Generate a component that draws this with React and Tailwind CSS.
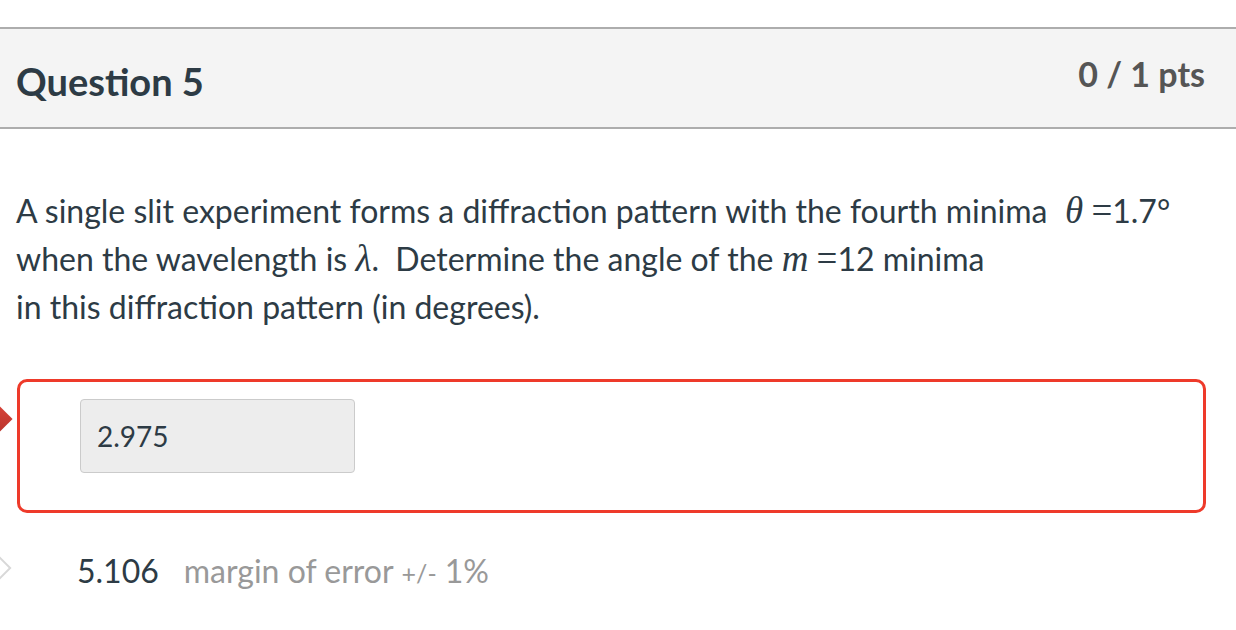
import React from 'react';

const Math = ({ children, italic }) => (
  <span className={`font-['Liberation_Serif',serif] text-[37px] leading-none ${italic ? 'italic' : ''}`}>{children}</span>
);

const App = () => {
  return (
    <div className="relative min-h-[630px] bg-white pt-[27px] font-['Lato',sans-serif] text-[#2d3b45]">
      {/* question header */}
      <div className="flex h-[102px] items-center justify-between border-y-2 border-[#adadad] bg-[#f4f4f4] pl-4 pr-[31px]">
        <h2 className="mt-[6px] text-[38px] font-bold text-[#2d3b45]">Question 5</h2>
        <div className="mt-[-10px] text-[34px] font-bold text-[#555]">0 / 1 pts</div>
      </div>

      {/* question text */}
      <div className="mt-[58px] pl-4 text-[32px] leading-[48px]">
        <p>
          A single slit experiment forms a diffraction pattern with the fourth minima{' '}
          <Math italic>&nbsp;θ</Math> <Math>=</Math>1.7°
        </p>
        <p>
          when the wavelength is <Math italic>λ</Math>.&nbsp; Determine the angle of the{' '}
          <Math italic>m</Math> <Math>=</Math>12 minima
        </p>
        <p>in this diffraction pattern (in degrees).</p>
      </div>

      {/* answer box */}
      <div className="relative mt-[48px]">
        <div className="absolute left-[-14px] top-[29px] h-[22px] w-[22px] rotate-45 bg-gradient-to-br from-[#d9443a] to-[#b8332b]" />
        <div className="ml-[17px] h-[134px] w-[1189px] rounded-[10px] border-[3px] border-[#ee3a2a] pl-[60px] pt-[17px]">
          <div className="flex h-[74px] w-[275px] items-center rounded-[4px] border border-[#cbcbcb] bg-[#ededed] pl-[16px] text-[28px] text-[#2d3b45]">
            2.975
          </div>
        </div>
      </div>

      {/* correct answer */}
      <div className="relative mt-[34px] flex items-baseline pl-[77px] text-[32px]">
        <div className="absolute left-[-15px] top-[10px] h-[22px] w-[22px] rotate-45 border-2 border-[#d8d8d8] bg-white" />
        <span className="text-[#2d3b45]">5.106</span>
        <span className="ml-[25px] text-[#999]">margin of error</span>
        <span className="ml-[8px] text-[25px] text-[#999]">+/-</span>
        <span className="ml-[8px] text-[#999]">1%</span>
      </div>
    </div>
  );
};

export default App;
